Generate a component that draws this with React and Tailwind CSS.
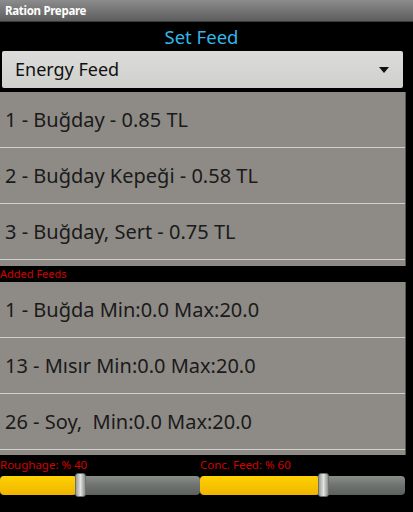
import React from "react";

const feeds = [
  "1 - Buğday - 0.85 TL",
  "2 - Buğday Kepeği - 0.58 TL",
  "3 - Buğday, Sert - 0.75 TL",
];

const added = [
  "1 - Buğda Min:0.0 Max:20.0",
  "13 - Mısır Min:0.0 Max:20.0",
  "26 - Soy,  Min:0.0 Max:20.0",
];

function FeedList({ items, height }) {
  return (
    <div
      className={`w-[406px] bg-[#8e8b86] border-r border-[#5a5855] overflow-hidden flex flex-col ${height}`}
    >
      {items.map((t, i) => (
        <div
          key={i}
          className="h-[56px] shrink-0 flex items-center pl-[5px] text-[20px] text-[#1a1a1a] border-b border-[#d2d0cc] whitespace-pre"
        >
          {t}
        </div>
      ))}
    </div>
  );
}

function Slider({ label, pct, width }) {
  return (
    <div className={`flex flex-col ${width}`}>
      <div className="h-[18px] text-[11.5px] leading-[18px] text-[#d40000] pt-[1px]">{label}</div>
      <div className="relative h-[24px] flex items-center">
        <div className="w-full h-[19px] rounded-[4px] bg-gradient-to-b from-[#8a8f8a] via-[#6f736f] to-[#5d615d] overflow-hidden">
          <div
            className="h-full rounded-[4px] bg-gradient-to-b from-[#ffd200] to-[#f0b400]"
            style={{ width: `calc(${pct} - 4px)` }}
          />
        </div>
        <div
          className="absolute top-0 w-[11px] h-[24px] rounded-[3px] bg-gradient-to-r from-[#9a9d9a] via-[#e2e4e2] to-[#8f928f] border border-[#6d706d]"
          style={{ left: `calc(${pct} - 5px)` }}
        />
      </div>
    </div>
  );
}

export default function App() {
  return (
    <div className="w-[413px] h-[512px] bg-black overflow-hidden font-['Noto_Sans',sans-serif]">
      <div className="h-[22px] bg-gradient-to-b from-[#8c8c8c] to-[#5e5e5e] border-b border-[#3a3a3a] flex items-center pl-[5px]">
        <span className="text-white text-[11.5px] font-bold tracking-[-0.3px]">Ration Prepare</span>
      </div>
      <div className="h-[28px] flex items-center justify-center pr-[10px] text-[#33b5e5] text-[18.5px] mt-[1px]">
        Set Feed
      </div>
      <div className="ml-[2px] w-[401px] h-[37px] rounded-[2px] bg-gradient-to-b from-[#dcdcda] to-[#cfcfcc] flex items-center justify-between pl-[13px] pr-[14px] text-[18px] text-[#111]">
        <span>Energy Feed</span>
        <svg width="10" height="6" viewBox="0 0 10 6">
          <path d="M0 0H10L5 6Z" fill="#111" />
        </svg>
      </div>
      <div className="h-[4px]" />
      <FeedList items={feeds} height="h-[174px]" />
      <div className="h-[16px] text-[11px] leading-[16px] text-[#d40000]">Added Feeds</div>
      <FeedList items={added} height="h-[173px]" />
      <div className="flex">
        <Slider label="Roughage: % 40" pct="40%" width="w-[200px]" />
        <Slider label="Conc. Feed: % 60" pct="60%" width="w-[205px]" />
      </div>
    </div>
  );
}
